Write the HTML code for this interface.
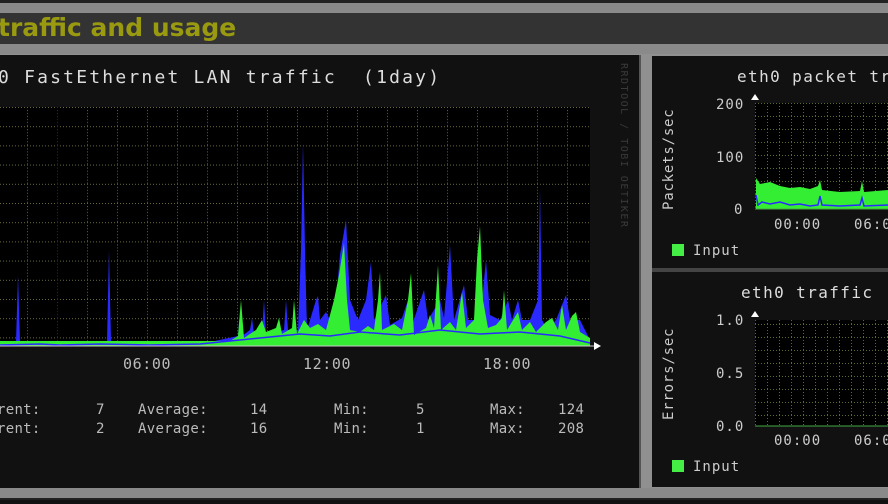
<!DOCTYPE html><html><head><style>
body{margin:0;width:888px;height:500px;overflow:hidden;background:#111;font-family:"DejaVu Sans Mono","Liberation Mono",monospace}
</style></head><body>
<svg width="888" height="500" xmlns="http://www.w3.org/2000/svg" font-family="DejaVu Sans Mono, Liberation Mono, monospace">
<defs>
<pattern id="gm" x="147" y="107" width="30" height="19.2" patternUnits="userSpaceOnUse">
<line x1="0.5" y1="0" x2="0.5" y2="19.2" stroke="#5a6a2a" stroke-dasharray="1,2"/>
<line x1="0" y1="0.5" x2="30" y2="0.5" stroke="#6a6a3a" stroke-dasharray="1,2"/>
</pattern>
<pattern id="gs" x="755" y="103" width="12" height="13" patternUnits="userSpaceOnUse">
<line x1="0.5" y1="0" x2="0.5" y2="13" stroke="#5a6a2a" stroke-dasharray="1,2"/>
<line x1="0" y1="0.5" x2="12" y2="0.5" stroke="#5a6a2a" stroke-dasharray="1,2"/>
</pattern>
</defs>
<rect width="888" height="500" fill="#1a1a1a"/>
<rect x="0" y="0" width="888" height="3" fill="#222"/>
<rect x="0" y="3" width="888" height="10" fill="#8a8a8a"/>
<rect x="0" y="13" width="888" height="31" fill="#333"/>
<text x="-2" y="36" font-family="DejaVu Sans, Liberation Sans, sans-serif" font-weight="bold" font-size="25" fill="#9a9a10">traffic and usage</text>
<rect x="0" y="44" width="888" height="10" fill="#8a8a8a"/>
<rect x="0" y="54" width="888" height="446" fill="#909090"/>
<rect x="0" y="55" width="639" height="433" fill="#111"/>
<rect x="639" y="55" width="2" height="433" fill="#555"/>
<rect x="652" y="56" width="236" height="212" fill="#111"/>
<rect x="652" y="272" width="236" height="215" fill="#111"/>
<rect x="652" y="268" width="236" height="4" fill="#444"/>
<rect x="0" y="488" width="888" height="12" fill="#8a8a8a"/>
<rect x="0" y="498" width="888" height="2" fill="#222"/>
<text x="-2" y="83" font-size="18" letter-spacing="2.2" fill="#ddd" xml:space="preserve">0 FastEthernet LAN traffic  (1day)</text>
<text transform="translate(621,63) rotate(90)" font-size="10" letter-spacing="1.5" fill="#3a3a3a">RRDTOOL / TOBI OETIKER</text>
<rect x="0" y="107" width="590" height="239" fill="#000"/>
<rect x="0" y="107" width="590" height="239" fill="url(#gm)"/>
<polygon fill="#2a2aff" points="0,346 0,342 16,342 18,275 20,342 107,342 109,250 111,342 210,342 238,336 240,310 242,336 250,330 252,318 254,334 262,332 264,300 266,334 284,330 286,300 288,330 298,330 301,250 303,143 305,250 307,330 316,300 318,296 320,320 326,312 330,320 336,300 340,255 346,220 350,300 358,320 366,300 371,262 374,320 386,295 390,325 402,318 408,300 412,325 424,290 428,320 440,300 444,318 450,245 454,320 464,285 468,320 476,320 482,300 486,260 490,315 500,320 508,300 512,320 518,300 522,320 530,320 538,300 540,190 542,320 548,330 556,320 566,295 570,320 580,320 590,340 590,346"/>
<polygon fill="#33ee33" points="0,346 0,341 230,341 238,336 241,300 244,338 256,330 262,320 266,332 276,328 279,318 282,334 292,328 294,300 297,334 304,320 310,328 318,324 326,330 334,300 339,275 344,243 347,300 350,330 360,332 368,326 374,330 378,300 380,272 382,330 394,324 402,330 408,300 411,273 414,335 426,328 430,315 434,328 438,265 441,330 450,322 456,330 462,292 466,328 474,320 477,260 480,226 483,300 488,328 496,325 502,318 504,290 507,330 518,312 522,330 530,322 536,332 546,322 552,318 558,330 562,305 566,330 572,316 576,312 580,332 590,338 590,346"/>
<polyline fill="none" stroke="#2a2aff" stroke-width="1.5" points="0,345 40,344 60,345 100,344 150,345 200,344 240,340 260,338 300,334 330,336 360,332 400,335 440,330 480,334 520,332 560,336 590,343"/>
<line x1="0" y1="346" x2="594" y2="346" stroke="#ccc"/>
<polygon points="594,342 594,350 601,346" fill="#fff"/>
<g font-size="15" fill="#bbb" letter-spacing="0.6">
<text x="123" y="369">06:00</text><text x="303" y="369">12:00</text><text x="483" y="369">18:00</text>
</g>
<g font-size="14" fill="#bbb" letter-spacing="0.3">
<text x="-3" y="414">rent:</text><text x="96" y="414">7</text><text x="138" y="414">Average:</text><text x="250" y="414">14</text><text x="334" y="414">Min:</text><text x="416" y="414">5</text><text x="490" y="414">Max:</text><text x="558" y="414">124</text>
<text x="-3" y="433">rent:</text><text x="96" y="433">2</text><text x="138" y="433">Average:</text><text x="250" y="433">16</text><text x="334" y="433">Min:</text><text x="416" y="433">1</text><text x="490" y="433">Max:</text><text x="558" y="433">208</text>
</g>
<text x="737" y="82" font-size="16" letter-spacing="1.4" fill="#ddd">eth0 packet tr</text>
<text transform="translate(673,210) rotate(-90)" font-size="14" letter-spacing="0.8" fill="#ccc">Packets/sec</text>
<g font-size="14" fill="#ccc" letter-spacing="1"><text x="716" y="109">200</text><text x="716" y="162">100</text><text x="734" y="214">0</text></g>
<rect x="755" y="103" width="133" height="106" fill="#000"/>
<rect x="755" y="103" width="133" height="106" fill="url(#gs)"/>
<polygon fill="#33ee33" points="756,209 756,178 760,184 770,182 780,186 790,188 800,187 810,189 818,186 820,180 822,190 840,192 860,191 862,181 864,192 888,190 888,209"/>
<polyline fill="none" stroke="#2a2aff" stroke-width="1.5" points="756,195 758,205 762,202 770,204 780,202 790,205 800,204 810,206 818,205 820,196 822,205 840,206 860,205 862,198 864,206 888,205"/>
<line x1="755" y1="209" x2="888" y2="209" stroke="#4a4"/>
<polygon points="751,100 759,100 755,94" fill="#fff"/>
<g font-size="14" fill="#ccc" letter-spacing="1"><text x="774" y="229">00:00</text><text x="854" y="229">06:00</text></g>
<rect x="672" y="244" width="12" height="12" fill="#44ee44"/>
<text x="693" y="255" font-size="14" letter-spacing="1" fill="#ccc">Input</text>
<text x="741" y="298" font-size="16" letter-spacing="1.4" fill="#ddd">eth0 traffic</text>
<text transform="translate(673,420) rotate(-90)" font-size="14" letter-spacing="0.8" fill="#ccc">Errors/sec</text>
<g font-size="14" fill="#ccc" letter-spacing="1"><text x="716" y="325">1.0</text><text x="716" y="378">0.5</text><text x="716" y="431">0.0</text></g>
<rect x="755" y="320" width="133" height="106" fill="#000"/>
<rect x="755" y="320" width="133" height="106" fill="url(#gs)"/>
<line x1="755" y1="426" x2="888" y2="426" stroke="#4a4"/>
<polygon points="751,317 759,317 755,311" fill="#fff"/>
<g font-size="14" fill="#ccc" letter-spacing="1"><text x="774" y="445">00:00</text><text x="854" y="445">06:00</text></g>
<rect x="672" y="460" width="12" height="12" fill="#44ee44"/>
<text x="693" y="471" font-size="14" letter-spacing="1" fill="#ccc">Input</text>
</svg>
</body></html>
